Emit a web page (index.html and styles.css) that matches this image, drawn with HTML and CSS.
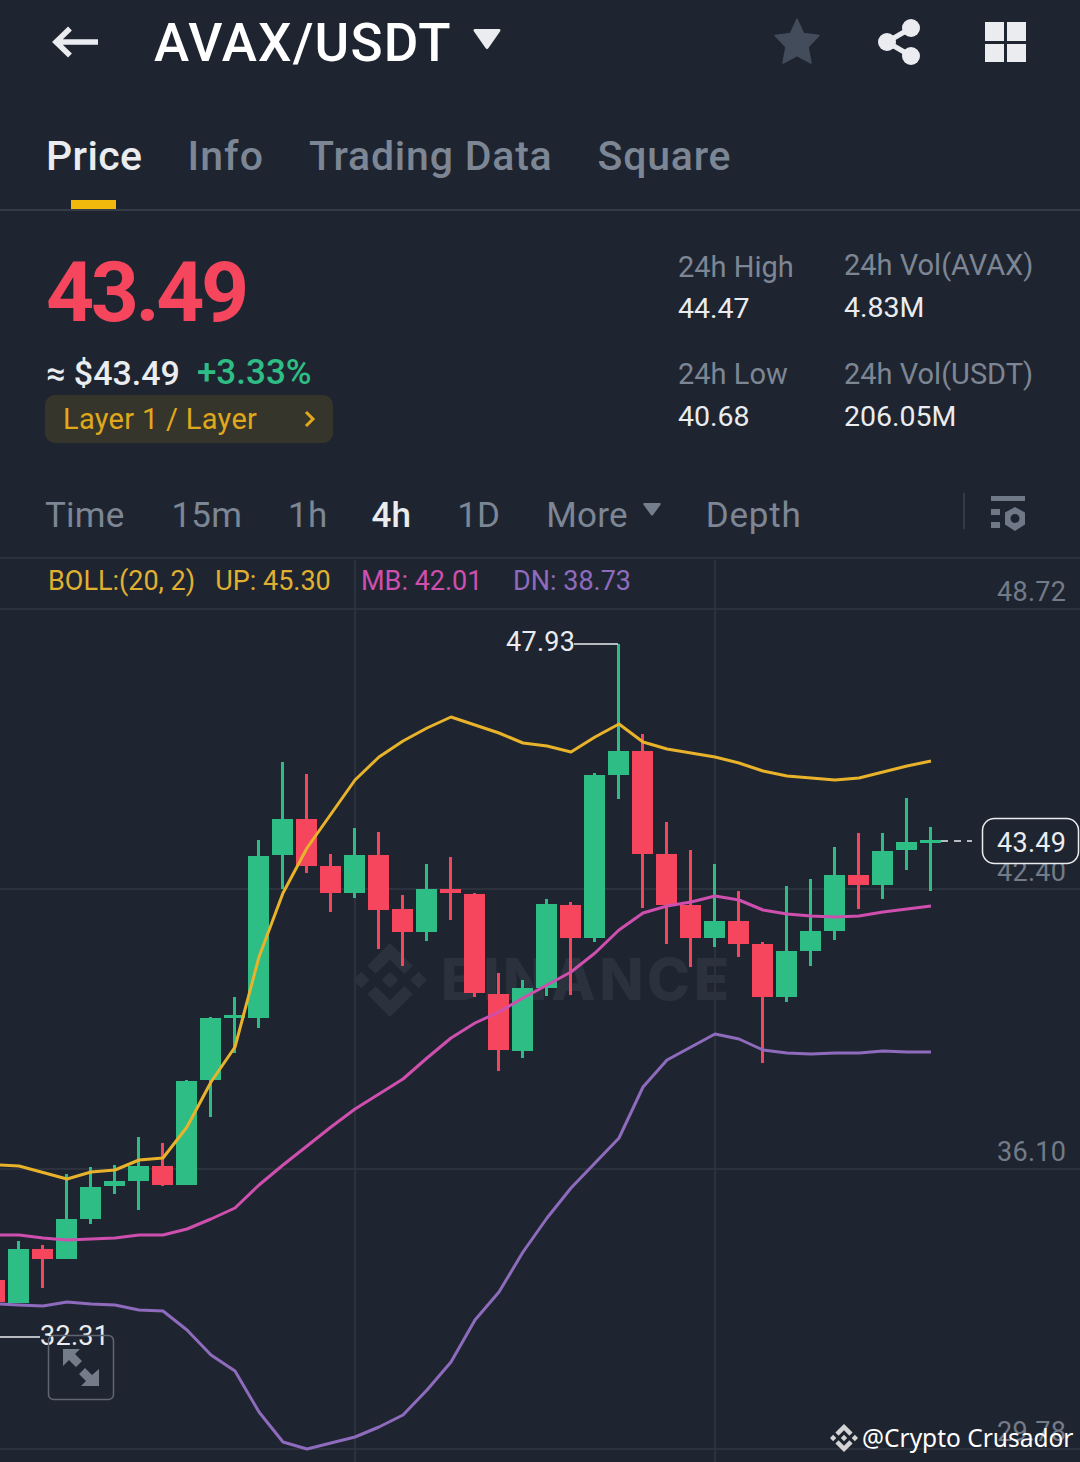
FILE: index.html
```html
<!DOCTYPE html>
<html lang="en">
<head>
<meta charset="utf-8">
<title>AVAX/USDT</title>
<link rel="stylesheet" href="styles.css">
</head>
<body>
<div class="app">
  <header class="topbar">
    <svg class="icon-back" viewBox="0 0 46 32"><path d="M46 16H5M18 2.500 4 16l14 13.500" fill="none" stroke="#eaecef" stroke-width="5.500"/></svg>
    <h1 class="pair">AVAX/USDT</h1>
    <svg class="icon-caret" viewBox="0 0 28 22"><path d="M2 1h24c1.500 0 2 1 1 2.500L15.500 20c-1 1.500-2 1.500-3 0L1 3.500C0 2 .5 1 2 1z" fill="#eaecef"/></svg>
    <div class="top-actions">
      <svg class="icon-star" viewBox="0 0 46 46"><path d="M23 1l6.500 14.500L45 17.500 34 29l3 16-14-7.500L9 45l3-16L1 17.500l15.500-2z" fill="#434c5a" stroke="#434c5a" stroke-width="1.500" stroke-linejoin="round"/></svg>
      <svg class="icon-share" viewBox="0 0 42 46"><g fill="#eaecef"><circle cx="9" cy="23" r="9"/><circle cx="33" cy="9" r="9"/><circle cx="33" cy="37" r="9"/></g><path d="M9 23 33 9M9 23l24 14" stroke="#eaecef" stroke-width="5"/></svg>
      <div class="icon-grid"><i></i><i></i><i></i><i></i></div>
    </div>
  </header>

  <nav class="tabs">
    <a class="tab active">Price</a>
    <a class="tab tab-info">Info</a>
    <a class="tab">Trading Data</a>
    <a class="tab">Square</a>
  </nav>

  <section class="summary">
    <div class="quote">
      <div class="last">43.49</div>
      <div class="fiat"><span class="approx">≈ $43.49</span><span class="change">+3.33%</span></div>
      <div class="tag"><span>Layer 1 / Layer</span>
        <svg class="icon-chevron" viewBox="0 0 12 18"><path d="M2 2l7 7-7 7" fill="none" stroke="#e0a91c" stroke-width="3"/></svg>
      </div>
    </div>
    <dl class="stats">
      <div class="stat"><dt>24h High</dt><dd>44.47</dd></div>
      <div class="stat stat-up"><dt>24h Vol(AVAX)</dt><dd>4.83M</dd></div>
      <div class="stat"><dt>24h Low</dt><dd class="dd-low">40.68</dd></div>
      <div class="stat"><dt>24h Vol(USDT)</dt><dd class="dd-low">206.05M</dd></div>
    </dl>
  </section>

  <div class="intervals">
    <span class="iv iv-time">Time</span>
    <span class="iv iv-15">15m</span>
    <span class="iv iv-1h">1h</span>
    <span class="iv iv-4h active">4h</span>
    <span class="iv iv-1d">1D</span>
    <span class="iv iv-more">More</span>
    <svg class="icon-more" viewBox="0 0 18 13"><path d="M1.500 0h15c1 0 1.500 1 1 1.800L10 12c-.6.800-1.400.800-2 0L.5 1.800C0 1 .5 0 1.500 0z" fill="#757e8c"/></svg>
    <span class="iv iv-depth">Depth</span>
    <span class="iv-divider"></span>
    <svg class="icon-settings" viewBox="0 0 36 36"><path d="M1 1h34v5H1zM1 14h9v6H1zM1 27h9v6H1z" fill="#6f7887"/><path fill-rule="evenodd" d="M25 12l10 5.500v12L25 36l-10-6.500v-12zM25 19a4.500 4.500 0 1 0 0 9 4.500 4.500 0 0 0 0-9z" fill="#6f7887"/></svg>
  </div>

  <main class="chart">
    <svg class="plot" viewBox="0 559 1080 903">
      <path class="grid" d="M0 609H1080M0 889H1080M0 1169H1080M0 1449H1080M355 560V1462M715 560V1462"/>
      <g class="wm">
        <svg x="353" y="943" width="74" height="74" viewBox="0 0 100 100"><path d="M30.600 42 50 22.600 69.400 42l11.300-11.300L50 0 19.300 30.700zM30.600 58 50 77.400 69.400 58l11.300 11.300L50 100 19.300 69.300zM0 50l11.300-11.300L22.600 50 11.300 61.300zM77.400 50l11.300-11.300L100 50 88.700 61.300zM50 38.700 61.300 50 50 61.300 38.700 50z"/></svg>
        <text class="wm-text" x="441" y="1000">BINANCE</text>
      </g>
      <path class="wick-g" d="M18.500 1241V1303M66.500 1174V1259M90.500 1167V1224M114.500 1165V1194M138.500 1137V1210M186.500 1080V1185M210.500 1017V1117M234.500 997V1053M258.500 840V1028M282.500 762V889M354.500 828V898M426.500 864V941M522.500 980V1058M546.500 899V996M594.500 773V942M618.500 644V799M714.500 864V947M786.500 886V1002M810.500 879V966M834.500 847V940M882.500 833V899M906.500 798V870M930.500 827V891"/>
      <path class="wick-r" d="M42.500 1245V1288M162.500 1143V1186M306.500 774V873M330.500 854V912M378.500 832V949M402.500 895V966M450.500 857V920M474.500 893V997M498.500 973V1071M570.500 902V995M642.500 734V908M666.500 822V944M690.500 850V967M738.500 891V957M762.500 942V1063M858.500 833V909"/>
      <path class="body-g" d="M8 1249h21v54h-21zM56 1219h21v40h-21zM80 1187h21v32h-21zM104 1181h21v5h-21zM128 1166h21v15h-21zM176 1081h21v104h-21zM200 1018h21v62h-21zM224 1015h21v3h-21zM248 856h21v162h-21zM272 819h21v36h-21zM344 855h21v38h-21zM416 889h21v43h-21zM512 988h21v63h-21zM536 904h21v84h-21zM584 775h21v163h-21zM608 751h21v24h-21zM704 921h21v17h-21zM776 951h21v46h-21zM800 931h21v20h-21zM824 875h21v56h-21zM872 851h21v34h-21zM896 842h21v8h-21zM920 840h21v3h-21z"/>
      <path class="body-r" d="M-16 1280h21v22h-21zM32 1249h21v10h-21zM152 1166h21v19h-21zM296 819h21v47h-21zM320 866h21v27h-21zM368 855h21v55h-21zM392 909h21v23h-21zM440 889h21v4h-21zM464 894h21v99h-21zM488 994h21v56h-21zM560 905h21v33h-21zM632 751h21v103h-21zM656 854h21v51h-21zM680 905h21v33h-21zM728 921h21v23h-21zM752 944h21v53h-21zM848 875h21v10h-21z"/>
      <polyline class="line up" points="0,1165 19,1166 67,1179 91,1172 115,1170 139,1160 163,1158 187,1127 211,1082 235,1047 259,957 283,893 307,848 331,814 355,780 379,757 403,741 427,728 451,717 475,725 499,733 523,743 547,746 571,752 595,737 619,724 643,742 667,749 691,753 715,757 739,763 763,771 787,776 811,778 835,780 859,778 883,772 907,766 931,761"/>
      <polyline class="line mb" points="0,1235 19,1235 43,1238 67,1240 91,1239 115,1238 139,1235 163,1235 187,1229 211,1219 235,1208 259,1185 283,1165 307,1146 331,1127 355,1109 379,1094 403,1079 427,1058 451,1038 475,1023 499,1012 523,998 547,985 571,972 595,953 619,930 643,913 667,906 691,902 715,896 739,900 763,910 787,914 811,916 835,917 859,916 883,912 907,909 931,906"/>
      <polyline class="line dn" points="0,1304 19,1305 43,1306 67,1302 91,1304 115,1305 139,1310 163,1311 187,1330 211,1355 235,1371 259,1412 283,1442 307,1449 331,1443 355,1437 379,1427 403,1415 427,1390 451,1362 475,1320 499,1292 523,1252 547,1218 571,1188 595,1163 619,1138 643,1087 667,1060 691,1047 715,1034 739,1039 763,1050 787,1053 811,1054 835,1053 859,1053 883,1051 907,1052 931,1052"/>
      <path class="leader" d="M574 644H618M0 1337H40"/>
      <text class="mark" x="506" y="651">47.93</text>
      <text class="mark" x="40" y="1345">32.31</text>
      <text class="axis" x="997" y="601">48.72</text>
      <text class="axis" x="997" y="881">42.40</text>
      <text class="axis" x="997" y="1161">36.10</text>
      <text class="axis" x="997" y="1441">29.78</text>
      <path class="dash" d="M941 841H972"/>
      <rect class="last-box" x="982.500" y="818.500" width="96" height="45" rx="12"/>
      <text class="last-label" x="997" y="852">43.49</text>
      <rect class="expand-box" x="48.500" y="1335.500" width="65" height="64" rx="5"/>
      <path class="expand" d="M63 1349h17l-5 5 7 7-6 6-7-7-6 6zM99 1386H81l5-5-7-7 6-6 7 7 7-6z"/>
      <svg x="830" y="1424" width="28" height="28" viewBox="0 0 100 100"><path class="credit-logo" d="M30.600 42 50 22.600 69.400 42l11.300-11.300L50 0 19.300 30.700zM30.600 58 50 77.400 69.400 58l11.300 11.300L50 100 19.300 69.300zM0 50l11.300-11.300L22.600 50 11.300 61.300zM77.400 50l11.300-11.300L100 50 88.700 61.300zM50 38.700 61.300 50 50 61.300 38.700 50z"/></svg>
      <text class="credit" x="862" y="1447">@Crypto Crusador</text>
    </svg>
    <div class="legend">
      <span class="lg-up">BOLL:(20, 2)</span>
      <span class="lg-up lg-val">UP: 45.30</span>
      <span class="lg-mb">MB: 42.01</span>
      <span class="lg-dn">DN: 38.73</span>
    </div>
  </main>
</div>
</body>
</html>
```
FILE: styles.css
```css
* { box-sizing: border-box; }
html, body { margin: 0; padding: 0; background: #1f2530; overflow: hidden; }
.app {
  width: 1080px; height: 1462px; display: flex; flex-direction: column;
  background: #1f2530; color: #eaecef;
  font-family: Roboto, "Liberation Sans", sans-serif;
}

/* header */
.topbar { height: 84px; display: flex; align-items: center; padding-left: 52px; flex: none; }
.icon-back { width: 46px; height: 32px; flex: none; }
.pair { margin: 2px 0 0 56px; font-size: 53px; font-weight: 500; line-height: 84px; color: #fff; letter-spacing: 1.200px; white-space: nowrap; }
.icon-caret { width: 28px; height: 22px; margin: -6px 0 0 21px; flex: none; }
.top-actions { margin-left: auto; margin-right: 54px; display: flex; align-items: center; }
.icon-star { width: 46px; height: 46px; display: block; margin: -2px 1px 0 -1px; }
.icon-share { width: 42px; height: 46px; margin-left: 57px; display: block; }
.icon-grid { width: 41px; height: 40px; margin-left: 65px; display: grid; grid-template-columns: 1fr 1fr; gap: 3px; }
.icon-grid i { background: #eaecef; display: block; }

/* tabs */
.tabs { height: 127px; flex: none; display: flex; gap: 45px; padding: 0 0 0 46px; border-bottom: 2px solid #363c47; }
.tab { position: relative; font-size: 41px; line-height: 48px; margin-top: 48px; color: #7d8694; font-weight: 500; letter-spacing: .8px; white-space: nowrap; }
.tab.active { color: #eaecef; letter-spacing: .4px; }
.tab-info { letter-spacing: 1.100px; }
.tab.active::after { content: ""; position: absolute; left: 25px; top: 68px; width: 45px; height: 9px; background: #f0b90b; }

/* summary */
.summary { height: 247px; flex: none; display: flex; padding: 0 0 0 45px; }
.quote { width: 633px; flex: none; }
.last { font-size: 84px; font-weight: 700; line-height: 84px; margin: 40px 0 0 1px; color: #f6465d; letter-spacing: -3.500px; }
.fiat { display: flex; margin: 16px 0 0 1px; line-height: 44px; }
.approx { font-weight: 500; color: #eaecef; font-size: 34px; }
.change { margin-left: 17px; color: #2ebd85; font-weight: 500; font-size: 35px; }
.tag {
  width: 288px; height: 48px; margin-top: 0; padding: 0 17px 0 18px;
  display: flex; align-items: center; justify-content: space-between;
  background: #36352b; border-radius: 10px; color: #e0a91c; font-size: 29px; letter-spacing: .3px;
}
.icon-chevron { width: 12px; height: 18px; }
.stats { margin: 36px 0 0; display: grid; grid-template-columns: 166px 200px; grid-auto-rows: 107px; }
.stat { margin: 0; }
.stat-up { margin-top: -2px; }
.stat dt { color: #7d8694; font-size: 29px; line-height: 40px; white-space: nowrap; }
.stat dd { margin: 2px 0 0; color: #eaecef; font-size: 28.500px; line-height: 40px; white-space: nowrap; }
.stat .dd-low { margin-top: 3px; }
.stat-up dd { margin-top: 3px; }

/* intervals */
.intervals { height: 101px; flex: none; display: flex; align-items: flex-start; border-bottom: 2px solid #2c323d; padding: 0 0 0 45px; }
.iv { font-size: 35px; line-height: 50px; margin-top: 33px; color: #7d8694; letter-spacing: .2px; white-space: nowrap; }
.iv.active { color: #eaecef; font-weight: 500; }
.iv-15 { margin-left: 47px; }
.iv-1h, .iv-1d, .iv-more { margin-left: 46px; }
.iv-4h { margin-left: 44px; }
.icon-more { width: 18px; height: 13px; margin: 45px 0 0 15px; flex: none; }
.iv-depth { margin-left: 45px; letter-spacing: .8px; }
.iv-divider { width: 2px; height: 36px; background: #363c47; margin: 35px 0 0 auto; flex: none; }
.icon-settings { width: 36px; height: 36px; margin: 37px 54px 0 25px; flex: none; }

/* chart */
.chart { position: relative; flex: 1 1 auto; min-height: 0; overflow: hidden; }
.plot { display: block; width: 1080px; height: 903px; }
.grid { stroke: #303642; stroke-width: 1.500; fill: none; }
.wm { fill: #2c323d; }
.wm-text { font-family: Inter, Roboto, sans-serif; font-weight: 800; font-size: 58px; letter-spacing: 3.500px; }
.wick-g { stroke: #2ebd85; stroke-width: 3; fill: none; }
.wick-r { stroke: #f6465d; stroke-width: 3; fill: none; }
.body-g { fill: #2ebd85; }
.body-r { fill: #f6465d; }
.line { fill: none; stroke-width: 3; stroke-linejoin: round; }
.up { stroke: #e8b32a; }
.mb { stroke: #cf4fae; }
.dn { stroke: #8e6bbd; }
.leader { stroke: #eaecef; stroke-width: 1.500; fill: none; }
.mark { font-size: 27px; fill: #eaecef; letter-spacing: .3px; }
.axis { font-size: 27px; fill: #737b88; letter-spacing: .3px; }
.dash { stroke: #eaecef; stroke-width: 1.500; stroke-dasharray: 7 6; fill: none; }
.last-box { fill: #1f2530; stroke: #eaecef; stroke-width: 1.500; }
.last-label { font-size: 27px; fill: #eaecef; letter-spacing: .3px; }
.expand-box { fill: none; stroke: #5f6672; stroke-width: 1.500; }
.expand { fill: #757c89; }
.credit-logo { fill: #d4d4d4; }
.credit { font-family: "Noto Sans", sans-serif; font-size: 24.500px; fill: #fff; }
.legend { position: absolute; left: 48px; top: 3px; display: flex; font-size: 27px; line-height: 38px; white-space: nowrap; }
.lg-up { color: #e0b030; }
.lg-val { margin-left: 20px; }
.lg-mb { color: #cf4fae; position: absolute; left: 313px; }
.lg-dn { color: #8e6bbd; position: absolute; left: 465px; }
```
